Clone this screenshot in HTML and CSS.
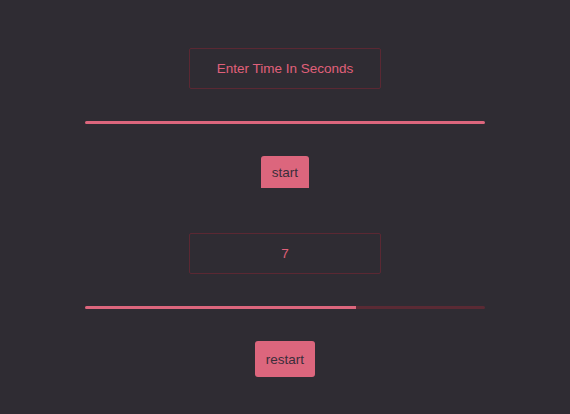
FILE: index.html
```html
<!DOCTYPE html>
<html lang="en">
<head>
    <meta charset="UTF-8">
    <meta name="viewport" content="width=device-width, initial-scale=1.0">
    <title>Countdown</title>
    <link rel="stylesheet" href="styles.css">
</head>
<body>
    <div class="timer">
        <input class="time-input" type="text" placeholder="Enter Time In Seconds">
        <div class="bar"><div class="bar-fill" style="width: 100%"></div></div>
        <button class="btn btn-start">start</button>
    </div>

    <div class="timer second">
        <input class="time-input" type="text" value="7">
        <div class="bar"><div class="bar-fill" style="width: 67.75%"></div></div>
        <button class="btn btn-restart">restart</button>
    </div>
</body>
</html>
```

FILE: styles.css
```css
* {
    margin: 0;
    padding: 0;
    box-sizing: border-box;
}
body {
    font-family: "Liberation Sans", Arial, sans-serif;
    background-color: #2f2c33;
    overflow: hidden;
}
.timer {
    display: flex;
    flex-direction: column;
    align-items: center;
    padding-top: 48px;
}
.timer.second {
    padding-top: 45px;
}
.time-input {
    width: 192px;
    height: 41px;
    background: transparent;
    border: 1px solid #5b2833;
    border-radius: 2px;
    color: #e0607a;
    font-family: inherit;
    font-size: 13.5px;
    text-align: center;
    outline: none;
}
.time-input::placeholder {
    color: #e0607a;
}
.bar {
    width: 400px;
    height: 3px;
    margin-top: 32px;
    background: #5a2a34;
    border-radius: 2px;
    overflow: hidden;
}
.bar-fill {
    height: 100%;
    background: #dc667d;
}
.btn {
    margin-top: 32px;
    background: #dc667d;
    color: #3a2e3a;
    border: none;
    font-family: inherit;
    font-size: 13.5px;
    cursor: pointer;
}
.btn-start {
    width: 48px;
    height: 32px;
    border-radius: 3px 3px 0 0;
}
.btn-restart {
    width: 60px;
    height: 36px;
    border-radius: 3px;
}
```
